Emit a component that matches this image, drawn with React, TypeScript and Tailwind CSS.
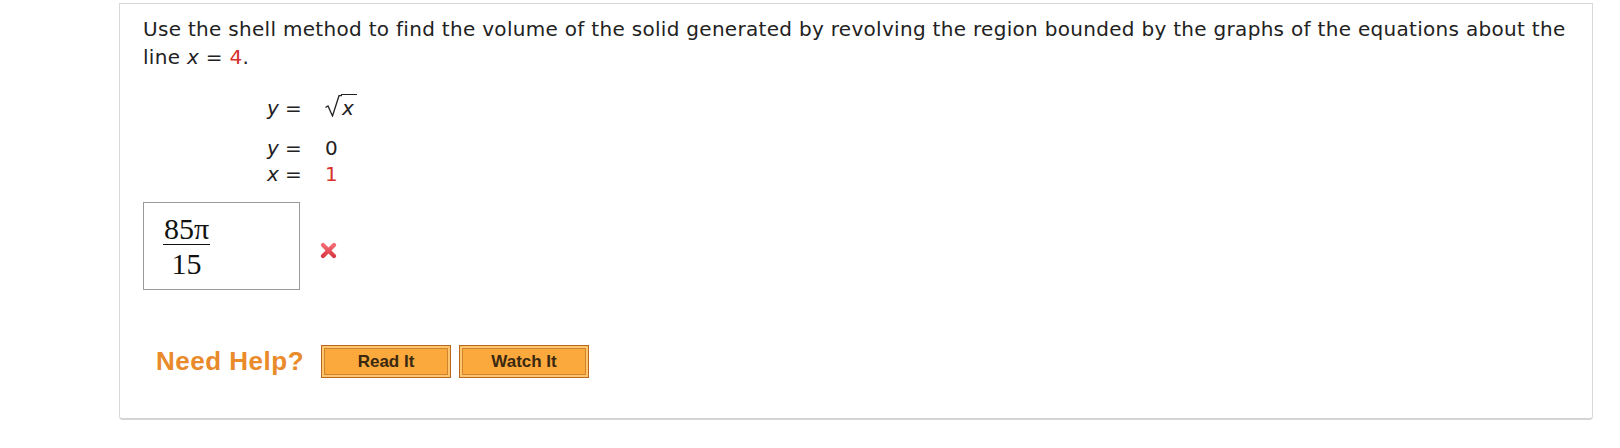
import React from 'react';

// red "wrong answer" mark
function WrongMark() {
  return (
    <svg width="17" height="17" viewBox="0 0 17 17" className="block">
      <defs>
        <linearGradient id="xg" x1="0" y1="0" x2="0" y2="1">
          <stop offset="0" stopColor="#f26b73" />
          <stop offset="1" stopColor="#db3a45" />
        </linearGradient>
      </defs>
      <path d="M3 3 L14 14 M14 3 L3 14" stroke="url(#xg)" strokeWidth="4.2" strokeLinecap="round" />
    </svg>
  );
}

function HelpButton({ label }: { label: string }) {
  return (
    <div className="w-[130px] h-[33px] border border-[#b9671f] bg-[#fdc56d] p-[2px]">
      <div className="h-full border border-[#cf8430] bg-[#fba93d] flex items-center justify-center text-[17px] font-bold text-[#3a2810] font-['Liberation_Sans',sans-serif]">
        {label}
      </div>
    </div>
  );
}

function Sqrt({ children }: { children: React.ReactNode }) {
  return (
    <span className="relative pl-[16px]">
      <svg width="17" height="22" viewBox="0 0 17 22" className="absolute left-0 top-[-1px]">
        <path d="M0.5 12.5 L3 11 L7.5 21 L14 0.7 L17 0.7" stroke="#222" strokeWidth="1.3" fill="none" />
      </svg>
      <span className="border-t-[1.3px] border-[#222] pt-[1px] pr-[3px] pl-[1px]">{children}</span>
    </span>
  );
}

export default function App() {
  return (
    <div className="w-[1620px] h-[448px] bg-white pt-[3px] pl-[119px] font-['DejaVu_Sans',sans-serif] text-[#222]">
      <div className="w-[1474px] h-[417px] border border-[#d8d8d8] border-b-2 border-b-[#d4d4d4] rounded-b-[4px] pl-[23px] pt-[11px]">
        {/* question */}
        <p className="text-[20px] leading-[28px] tracking-[0.3px] w-[1440px]">
          Use the shell method to find the volume of the solid generated by revolving the region bounded by the graphs of the equations about the
          line <i>x</i> = <span className="text-[#d8302c]">4</span>.
        </p>

        {/* equations */}
        <div className="ml-[124px] mt-[24px] text-[20px] leading-[26px] grid grid-cols-[18px_40px_auto] w-fit">
          <i className="mb-[14px]">y</i>
          <span>=</span>
          <span>
            <Sqrt>
              <i>x</i>
            </Sqrt>
          </span>
          <i>y</i>
          <span>=</span>
          <span>0</span>
          <i>x</i>
          <span>=</span>
          <span className="text-[#d8302c]">1</span>
        </div>

        {/* answer */}
        <div className="mt-[15px] flex items-center gap-[20px]">
          <div className="w-[157px] h-[88px] border border-[#9a9a9a] flex items-center pl-[19px]">
            <div className="inline-flex flex-col items-stretch font-['Liberation_Serif',serif] text-[30px] text-[#111]">
              <div className="px-[1px] leading-[30px] border-b-[1.5px] border-[#111]">85π</div>
              <div className="pt-[4px] leading-[30px] text-center">15</div>
            </div>
          </div>
          <div className="mt-[9px]">
            <WrongMark />
          </div>
        </div>

        {/* help */}
        <div className="mt-[55px] flex items-center">
          <span className="ml-[13px] mr-[17px] text-[26px] leading-[33px] font-bold tracking-[0.5px] text-[#e98a2b] font-['Liberation_Sans',sans-serif]">
            Need Help?
          </span>
          <div className="flex gap-[8px]">
            <HelpButton label="Read It" />
            <HelpButton label="Watch It" />
          </div>
        </div>
      </div>
    </div>
  );
}
